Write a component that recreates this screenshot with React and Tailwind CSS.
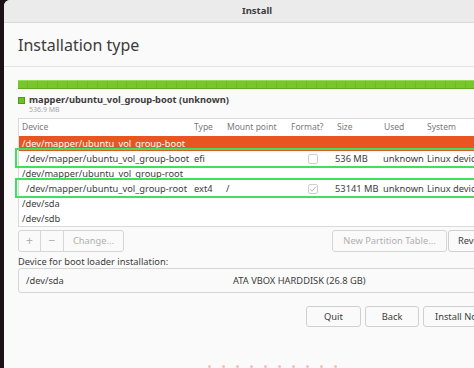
import React from "react";

const F = { fontFamily: '"Noto Sans", "Open Sans", sans-serif' };

function Check({ checked }) {
  return (
    <div className="w-[10px] h-[10px] border border-[#cfcfcf] rounded-[2px] bg-white flex items-center justify-center">
      {checked && (
        <svg width="8" height="8" viewBox="0 0 8 8">
          <path d="M1 4.2 L3 6.2 L7 1.5" fill="none" stroke="#b5b5b5" strokeWidth="1" />
        </svg>
      )}
    </div>
  );
}

const cols = "grid grid-cols-[172px_30px_66px_46px_47px_43px_90px] items-center";

function Row({ device, type = "", mount = "", fmt = null, size = "", used = "", system = "", selected, boxed, indent }) {
  return (
    <div className={`relative h-[15px] ${selected ? "bg-[#e95420] text-white" : "text-[#3c3c3c]"}`}>
      <div className={`${cols} h-full text-[9.3px] leading-none whitespace-nowrap`}>
        <div className={indent ? "pl-[7px]" : "pl-[3px]"}>{device}</div>
        <div className="pl-[3px]">{type}</div>
        <div className="pl-[5px]">{mount}</div>
        <div className="flex justify-center pl-[6px]">{fmt !== null && <Check checked={fmt} />}</div>
        <div className="pl-[2px]">{size}</div>
        <div className="pl-[3px]">{used}</div>
        <div className="pl-[4px]">{system}</div>
      </div>
      {boxed && (
        <div className="absolute left-[-4px] right-[-4px] top-[-3px] bottom-[-2px] border-2 border-[#3fe05e] pointer-events-none" />
      )}
    </div>
  );
}

export default function App() {
  return (
    <div className="w-[474px] h-[368px] overflow-hidden flex bg-[#1d1118]" style={F}>
      <div className="w-[4px] shrink-0 bg-[#1d1118]" />
      <div className="w-[506px] shrink-0 flex flex-col bg-[#fafafa] rounded-tl-[6px] overflow-hidden">
        <div className="h-[23px] shrink-0 bg-[#ebebeb] border-b border-[#d9d9d9] flex items-center justify-center text-[9.5px] font-bold text-[#3d3d3d]">
          Install
        </div>
        <div className="h-[44px] shrink-0 border-b border-[#e3e3e3] flex items-center pl-[14px] text-[16px] text-[#3c3c3c]">
          Installation type
        </div>
        <div className="px-[14px] flex flex-col">
          <div className="mt-[13px] h-[9px] bg-[#78c52c] border-t border-[#9bd95b] border-b border-b-[#62a822] flex">
            {Array.from({ length: 48 }).map((_, i) => (
              <div key={i} className="flex-1 border-r border-[#6db928]" />
            ))}
          </div>
          <div className="mt-[6px] flex items-center h-[10px]">
            <div className="w-[7px] h-[7px] bg-[#6cc12a] border border-[#4f9a17]" />
            <div className="ml-[4px] text-[9.3px] font-bold text-[#3c3c3c] leading-none">mapper/ubuntu_vol_group-boot (unknown)</div>
          </div>
          <div className="ml-[11px] text-[7px] text-[#a8a8a8] leading-[9px] h-[9px]">536.9 MB</div>
          <div className="mt-[4px] border border-[#dadada] bg-white">
            <div className={`${cols} h-[17px] text-[8.5px] text-[#7a7a7a] leading-none`}>
              <div className="pl-[3px]">Device</div>
              <div className="pl-[3px]">Type</div>
              <div className="pl-[6px] whitespace-nowrap">Mount point</div>
              <div className="pl-[4px]">Format?</div>
              <div className="pl-[4px]">Size</div>
              <div className="pl-[4px]">Used</div>
              <div className="pl-[4px]">System</div>
            </div>
            <Row device="/dev/mapper/ubuntu_vol_group-boot" selected />
            <Row device="/dev/mapper/ubuntu_vol_group-boot" type="efi" fmt={false} size="536 MB" used="unknown" system="Linux device-mapper" boxed indent />
            <Row device="/dev/mapper/ubuntu_vol_group-root" />
            <Row device="/dev/mapper/ubuntu_vol_group-root" type="ext4" mount="/" fmt={true} size="53141 MB" used="unknown" system="Linux device-mapper" boxed indent />
            <Row device="/dev/sda" />
            <Row device="/dev/sdb" />
          </div>
          <div className="mt-[3px] flex justify-between h-[22px]">
            <div className="flex border border-[#d6d6d6] rounded-[3px] bg-[#fafafa] text-[9.3px] text-[#b0b0b0]">
              <div className="w-[22px] flex items-center justify-center border-r border-[#d6d6d6] text-[12px]">+</div>
              <div className="w-[23px] flex items-center justify-center border-r border-[#d6d6d6] text-[12px]">−</div>
              <div className="w-[59px] flex items-center justify-center">Change...</div>
            </div>
            <div className="flex gap-[1px] text-[9.3px]">
              <div className="w-[115px] flex items-center justify-center border border-[#d6d6d6] rounded-[3px] text-[#b0b0b0]">New Partition Table...</div>
              <div className="w-[48px] flex items-center justify-center border border-[#cfcfcf] rounded-[3px] text-[#3c3c3c]">Revert</div>
            </div>
          </div>
          <div className="mt-[4px] h-[12px] text-[9.3px] text-[#3c3c3c] leading-none flex items-center">Device for boot loader installation:</div>
          <div className="h-[25px] border border-[#d6d6d6] rounded-[3px] bg-[#fafafa] flex items-center text-[9.3px] text-[#3c3c3c]">
            <div className="w-[214px] pl-[7px]">/dev/sda</div>
            <div>ATA VBOX HARDDISK (26.8 GB)</div>
          </div>
          <div className="mt-[13px] flex justify-end gap-[4px] h-[21px] text-[9.3px] text-[#3c3c3c]">
            <div className="w-[55px] flex items-center justify-center border border-[#d0d0d0] rounded-[3px] bg-[#fafafa]">Quit</div>
            <div className="w-[54px] flex items-center justify-center border border-[#d0d0d0] rounded-[3px] bg-[#fafafa]">Back</div>
            <div className="w-[73px] flex items-center justify-center border border-[#d0d0d0] rounded-[3px] bg-[#fafafa]">Install Now</div>
          </div>
          <div className="mt-[38px] ml-[190px] flex gap-[11px]">
            {Array.from({ length: 10 }).map((_, i) => (
              <div key={i} className="w-[3px] h-[3px] rounded-full bg-[#f4c2b8]" />
            ))}
          </div>
        </div>
      </div>
    </div>
  );
}
